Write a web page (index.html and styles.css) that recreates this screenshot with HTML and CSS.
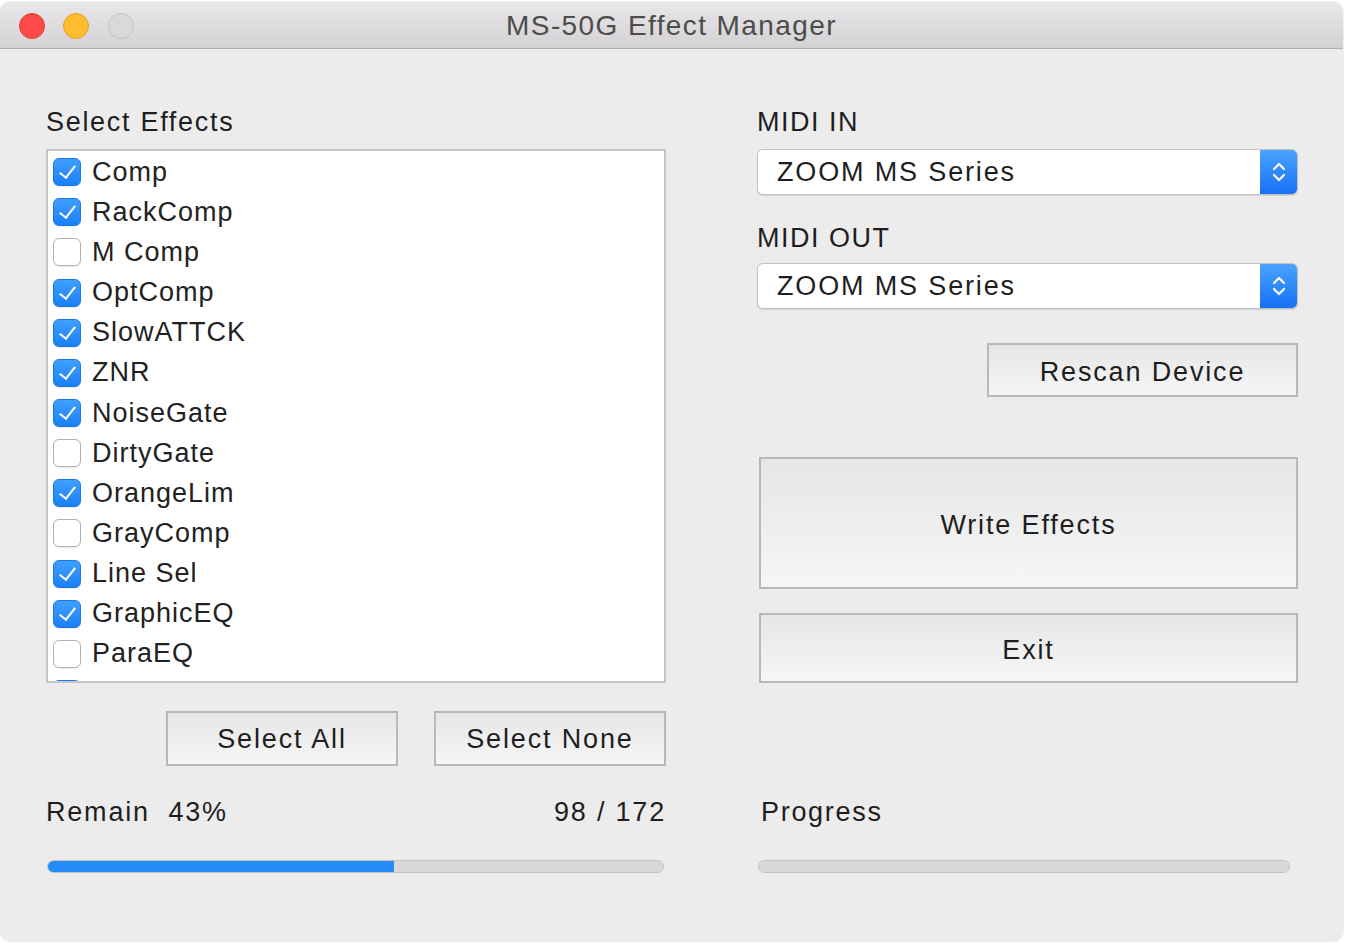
FILE: index.html
```html
<html>
<head>
    <meta charset="utf-8">
    <link rel="stylesheet" href="styles.css">
</head>
<body>
    <div class="window">
        <div class="titlebar">
            <div class="lights">
                <span class="light close"></span>
                <span class="light min"></span>
                <span class="light max"></span>
            </div>
            <div class="title">MS-50G Effect Manager</div>
        </div>

        <div class="content">
            <div class="col">
                <div class="label wide">Select Effects</div>
                <div class="list">
                    <div class="item"><span class="check on"></span>Comp</div>
                    <div class="item"><span class="check on"></span>RackComp</div>
                    <div class="item"><span class="check"></span>M Comp</div>
                    <div class="item"><span class="check on"></span>OptComp</div>
                    <div class="item"><span class="check on"></span>SlowATTCK</div>
                    <div class="item"><span class="check on"></span>ZNR</div>
                    <div class="item"><span class="check on"></span>NoiseGate</div>
                    <div class="item"><span class="check"></span>DirtyGate</div>
                    <div class="item"><span class="check on"></span>OrangeLim</div>
                    <div class="item"><span class="check"></span>GrayComp</div>
                    <div class="item"><span class="check on"></span>Line Sel</div>
                    <div class="item"><span class="check on"></span>GraphicEQ</div>
                    <div class="item"><span class="check"></span>ParaEQ</div>
                    <div class="item"><span class="check on"></span></div>
                </div>
            </div>

            <div class="col">
                <div class="label">MIDI IN</div>
                <div class="popup">
                    <span class="value">ZOOM MS Series</span>
                    <span class="stepper">
                        <svg width="16" height="26" viewBox="0 0 16 26"><path d="M3 10 L8 5 L13 10 M3 16 L8 21 L13 16" fill="none" stroke="#fff" stroke-width="2.2" stroke-linecap="round" stroke-linejoin="round"/></svg>
                    </span>
                </div>
                <div class="label gap">MIDI OUT</div>
                <div class="popup">
                    <span class="value">ZOOM MS Series</span>
                    <span class="stepper">
                        <svg width="16" height="26" viewBox="0 0 16 26"><path d="M3 10 L8 5 L13 10 M3 16 L8 21 L13 16" fill="none" stroke="#fff" stroke-width="2.2" stroke-linecap="round" stroke-linejoin="round"/></svg>
                    </span>
                </div>
                <button class="button rescan">Rescan Device</button>
                <button class="button write">Write Effects</button>
                <button class="button exit">Exit</button>
            </div>

            <div class="select-row">
                <button class="button small">Select All</button>
                <button class="button small">Select None</button>
            </div>
            <div></div>

            <div class="status">
                <div class="status-text"><span>Remain&nbsp;&nbsp;43%</span><span>98 / 172</span></div>
                <div class="bar"><div class="fill" style="width: 56.3%"></div></div>
            </div>
            <div class="status right">
                <div class="status-text"><span>Progress</span></div>
                <div class="bar"></div>
            </div>
        </div>
    </div>
</body>
</html>
```

FILE: styles.css
```css
body{
    margin: 0;
    background: #fff;
    font-family: "Liberation Sans", Arial, sans-serif;
    color: #1e1e1e;
}

.window{
    width: 1343px;
    height: 939px;
    margin-top: 2px;
    background: #ececec;
    border-radius: 10px;
    overflow: hidden;
    box-shadow: 0 0 0 1px rgba(0, 0, 0, 0.06);
}

.titlebar{
    position: relative;
    height: 46px;
    background: linear-gradient(#e9e7e9, #d3d1d3);
    border-bottom: 1px solid #b0afb0;
    display: flex;
    align-items: center;
    justify-content: center;
}

.lights{
    position: absolute;
    left: 19px;
    top: 11px;
    display: flex;
    gap: 18px;
}

.light{
    width: 24px;
    height: 24px;
    border-radius: 50%;
    border: 1px solid;
}

.close{ background: #fc4a46; border-color: #e23a35; }
.min{ background: #fdbd2e; border-color: #e0a122; }
.max{ background: #d9d9d9; border-color: #c4c4c4; margin-left: 1px; }

.title{
    font-size: 28px;
    letter-spacing: 1.4px;
    color: #4c4c4c;
    padding-top: 2px;
}

.content{
    display: grid;
    grid-template-columns: 620px 541px;
    column-gap: 91px;
    padding: 56px 0 0 46px;
}

.col{
    display: flex;
    flex-direction: column;
    align-items: flex-start;
}

.label{
    font-size: 27px;
    letter-spacing: 1.5px;
    line-height: 34px;
    margin-bottom: 10px;
}

.label.wide{
    letter-spacing: 1.7px;
}

.label.gap{
    margin-top: 26px;
    margin-bottom: 8px;
}

.list{
    width: 611px;
    height: 529px;
    background: #fff;
    border: 2px solid #c6c6c6;
    padding: 1px 0 0 5px;
    overflow: hidden;
}

.item{
    height: 40.17px;
    display: flex;
    align-items: center;
    font-size: 27px;
    letter-spacing: 1px;
    color: #222;
}

.check{
    width: 26px;
    height: 26px;
    border: 1px solid #b2b2b2;
    border-radius: 6px;
    background: #fff;
    margin-right: 11px;
    flex: none;
    box-shadow: 0 1px 1px rgba(0, 0, 0, 0.08);
    display: flex;
    align-items: center;
    justify-content: center;
}

.check.on{
    background: linear-gradient(#40a0fd, #1b7ff7);
    border-color: #1a78ee;
}

.check.on::after{
    content: "";
    width: 7px;
    height: 14px;
    border: solid #fff;
    border-width: 0 2.2px 2.2px 0;
    transform: translate(0, -2px) rotate(38deg);
}

.popup{
    width: 539px;
    height: 44px;
    background: #fff;
    border: 1px solid #c2c2c2;
    border-radius: 6px;
    box-shadow: 0 1px 1px rgba(0, 0, 0, 0.12);
    display: flex;
    align-items: center;
    overflow: hidden;
}

.value{
    flex: 1;
    padding-left: 19px;
    font-size: 27px;
    letter-spacing: 1.85px;
    color: #1e1e1e;
}

.stepper{
    width: 37px;
    height: 100%;
    background: linear-gradient(#4aa3fd, #1671f6);
    display: flex;
    align-items: center;
    justify-content: center;
}

.button{
    font-family: inherit;
    font-size: 27px;
    letter-spacing: 1.85px;
    color: #1e1e1e;
    background: linear-gradient(#e6e6e6, #f6f6f6);
    border: 2px solid #b8b8b8;
    padding: 4px 0 0 0;
}

.rescan{
    width: 311px;
    height: 54px;
    margin: 34px 0 0 230px;
}

.write{
    width: 539px;
    height: 132px;
    margin: 60px 0 0 2px;
}

.exit{
    width: 539px;
    height: 70px;
    margin: 24px 0 0 2px;
}

.select-row{
    display: flex;
    justify-content: flex-end;
    gap: 36px;
    margin-top: 28px;
}

.small{
    width: 232px;
    height: 55px;
    padding-top: 1px;
}

.status{
    margin-top: 29px;
}

.status-text{
    display: flex;
    justify-content: space-between;
    font-size: 27px;
    letter-spacing: 1.8px;
    line-height: 34px;
}

.status.right .status-text{
    padding-left: 4px;
    letter-spacing: 1.7px;
}

.bar{
    height: 11px;
    margin: 31px 2px 0 1px;
    background: #d8d8d8;
    border: 1px solid #c3c3c3;
    border-radius: 7px;
    overflow: hidden;
}

.status.right .bar{
    margin: 31px 8px 0 1px;
}

.fill{
    height: 100%;
    background: #258bf8;
}
```
